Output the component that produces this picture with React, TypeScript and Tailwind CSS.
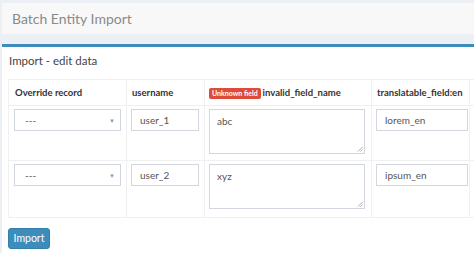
import React from "react";

const font = { fontFamily: "Lato, 'Noto Sans', sans-serif" };

function Select() {
  return (
    <div className="flex h-[22px] w-[107px] items-center justify-between border border-[#d2d6de] bg-white pl-[10px] pr-[5px] text-[10px] text-[#555]">
      <span>---</span>
      <span className="text-[6px] text-[#999]">▼</span>
    </div>
  );
}

function Input({ value }: { value: string }) {
  return (
    <div className="flex h-[22px] items-center border border-[#d2d6de] bg-white pl-[8px] text-[10px] text-[#555]">
      {value}
    </div>
  );
}

function TextArea({ value }: { value: string }) {
  return (
    <div className="relative h-[45px] w-[156px] border border-[#d2d6de] bg-white pl-[7px] pt-[4px] text-[10px] text-[#555]">
      {value}
      <svg className="absolute bottom-[1px] right-[1px]" width="6" height="6" viewBox="0 0 6 6">
        <path d="M5.5 1 L1 5.5 M5.5 3.5 L3.5 5.5" stroke="#999" strokeWidth="0.8" />
      </svg>
    </div>
  );
}

function Row({ user, text, tr, last }: { user: string; text: string; tr: string; last?: boolean }) {
  return (
    <div className={`grid grid-cols-[119px_78px_167px_98px] ${last ? "h-[56px]" : "h-[55px] border-b border-[#f0f0f0]"}`}>
      <div className="border-x border-[#f0f0f0] pl-[5px] pt-[3px]"><Select /></div>
      <div className="border-r border-[#f0f0f0] pl-[4px] pt-[3px] pr-[5px]"><Input value={user} /></div>
      <div className="border-r border-[#f0f0f0] pl-[4px] pt-[3px]"><TextArea value={text} /></div>
      <div className="border-r border-[#f0f0f0] pl-[4px] pt-[3px] pr-[1px]"><Input value={tr} /></div>
    </div>
  );
}

export default function App() {
  return (
    <div className="h-[253px] w-[474px] overflow-hidden bg-[#ecf0f5] pl-[2px]" style={font}>
      <div className="mt-[3px] flex h-[31px] items-center bg-[#f8f8f8] pl-[10px] text-[14px] text-[#8a8a8a]">
        Batch Entity Import
      </div>
      <div className="mt-[10px] h-[220px] border-t-[3px] border-[#3c8dbc] bg-white">
        <div className="flex h-[27px] items-center pl-[7px] text-[11.5px] text-[#444]">Import - edit data</div>
        <div className="ml-[6px] mt-[5px] border-t border-b border-[#f0f0f0] text-[#333]">
          <div className="grid h-[26px] grid-cols-[119px_78px_167px_98px] items-center border-b border-[#f0f0f0] text-[9.5px] font-bold">
            <div className="h-full border-x border-[#f0f0f0] pl-[6px] leading-[26px]">Override record</div>
            <div className="h-full border-r border-[#f0f0f0] pl-[5px] leading-[26px]">username</div>
            <div className="flex h-full items-center gap-[2px] border-r border-[#f0f0f0] pl-[4px]">
              <span className="rounded-[2px] bg-[#dd4b39] px-[3px] text-[7px] font-bold leading-[11px] text-white">Unknown field</span>
              <span>invalid_field_name</span>
            </div>
            <div className="h-full border-r border-[#f0f0f0] pl-[5px] leading-[26px]">translatable_field:en</div>
          </div>
          <Row user="user_1" text="abc" tr="lorem_en" />
          <Row user="user_2" text="xyz" tr="ipsum_en" last />
        </div>
        <div className="ml-[6px] mt-[10px] flex h-[21px] w-[42px] items-center justify-center rounded-[3px] border border-[#367fa9] bg-[#3c8dbc] text-[10.5px] text-white">
          Import
        </div>
      </div>
    </div>
  );
}
